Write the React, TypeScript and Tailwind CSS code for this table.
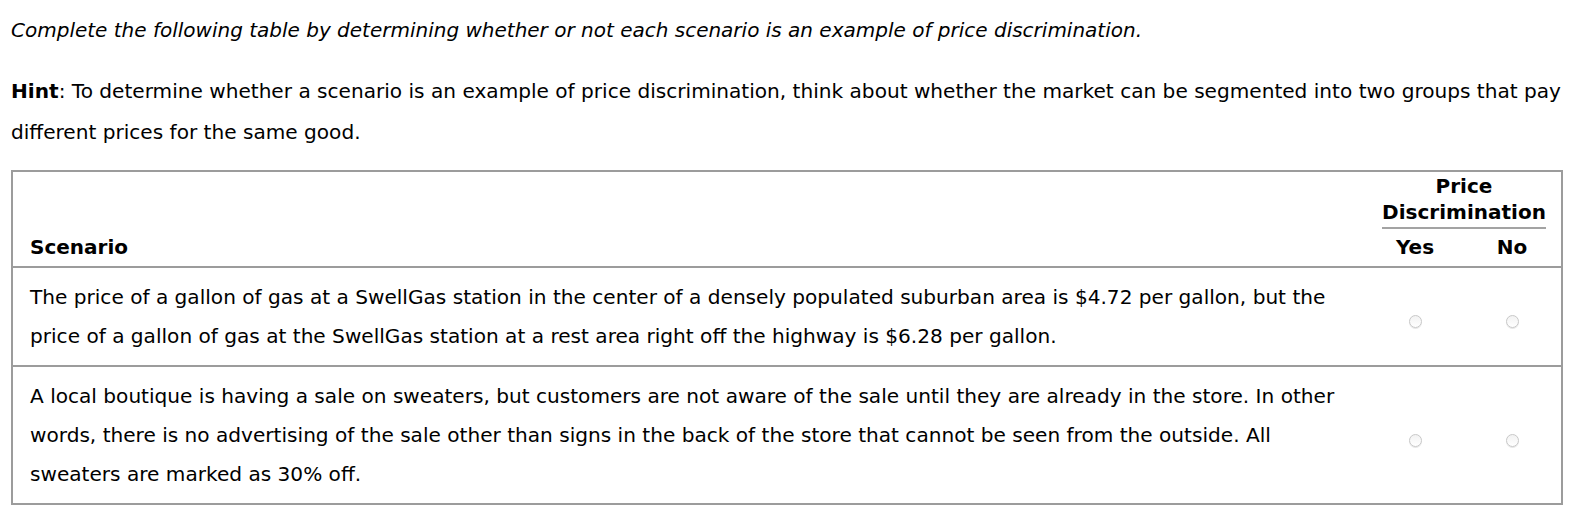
const rows = [
  [
    "The price of a gallon of gas at a SwellGas station in the center of a densely populated suburban area is $4.72 per gallon, but the",
    "price of a gallon of gas at the SwellGas station at a rest area right off the highway is $6.28 per gallon.",
  ],
  [
    "A local boutique is having a sale on sweaters, but customers are not aware of the sale until they are already in the store. In other",
    "words, there is no advertising of the sale other than signs in the back of the store that cannot be seen from the outside. All",
    "sweaters are marked as 30% off.",
  ],
];

export default function App() {
  return (
    <main className="bg-white text-black font-['DejaVu_Sans',Verdana,sans-serif] text-[20.1px] w-[1580px] h-[518px] overflow-hidden pt-[10px]">
      <p className="italic text-[20px] leading-[41px] px-[11px]">
        Complete the following table by determining whether or not each scenario is an example of price discrimination.
      </p>
      <p className="leading-[41px] px-[11px] mt-[20px]">
        <b>Hint</b>: To determine whether a scenario is an example of price discrimination, think about whether the market can be segmented into two groups that pay different prices for the same good.
      </p>

      <div className="ml-[11px] mt-[17px] w-[1552px] border-2 border-[#9c9c9c]">
        <div className="grid grid-cols-[1fr_96px_98px] border-b-2 border-[#9c9c9c] text-[20px]">
          <div className="flex items-end px-[17px] pb-[1px] font-bold leading-[36px]">Scenario</div>
          <div className="col-span-2 flex flex-col items-center pt-[2px] pb-[1px] font-bold">
            <div className="leading-[24px]">Price</div>
            <div className="leading-[29px] border-b-2 border-[#a3a3a3]">Discrimination</div>
            <div className="grid grid-cols-[96px_98px] leading-[36px] text-center">
              <span>Yes</span>
              <span>No</span>
            </div>
          </div>
        </div>
        {rows.map((lines, i) => (
          <Row key={i} lines={lines} last={i === rows.length - 1} />
        ))}
      </div>
    </main>
  );
}

function Row({ lines, last }: { lines: string[]; last: boolean }) {
  return (
    <div
      className={`grid grid-cols-[1fr_96px_98px] pt-[10px] pb-[9px] ${
        last ? "" : "border-b-2 border-[#9c9c9c]"
      }`}
    >
      <div className="px-[17px] leading-[39px] whitespace-nowrap">
        {lines.map((l, i) => (
          <div key={i}>{l}</div>
        ))}
      </div>
      <Radio />
      <Radio />
    </div>
  );
}

function Radio() {
  return (
    <div className="flex items-center justify-center pt-[9px]">
      <span className="w-[13px] h-[13px] rounded-full border border-[#c8c8c8] bg-gradient-to-b from-[#f2f2f2] to-white shadow-[0_1px_0_#e6e6e6]" />
    </div>
  );
}
